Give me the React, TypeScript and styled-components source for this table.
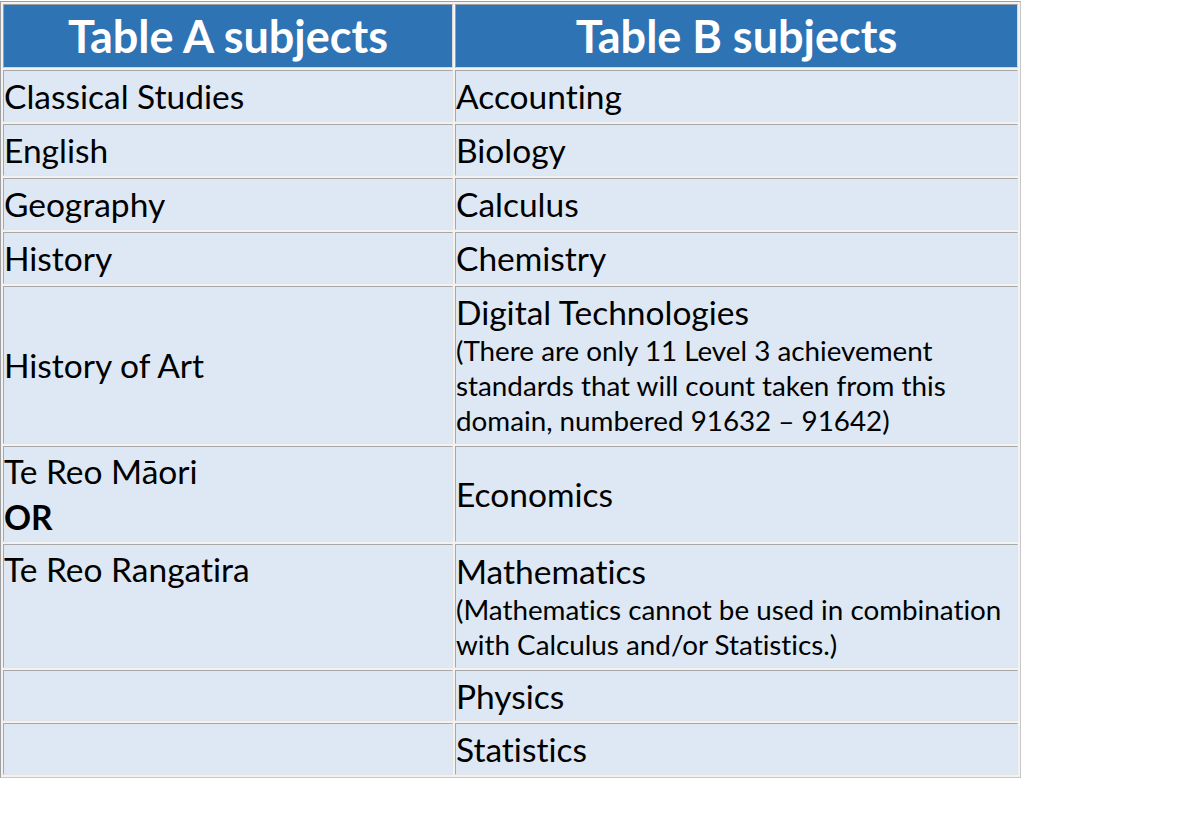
import styled, { createGlobalStyle } from "styled-components";

const GlobalStyle = createGlobalStyle`
    body {
        margin: 0;
        background: #ffffff;
        font-family: Lato, "Open Sans", sans-serif;
        font-variant-ligatures: none;
    }
`;

const Page = styled.div`
    padding-top: 1px;
`;

const SubjectTable = styled.table`
    width: 1021px;
    border-collapse: separate;
    border-spacing: 2px;
    border: 1px solid #9f9f9f;
    border-right-color: #c8c8c8;
    border-bottom-color: #c8c8c8;
    background: #f2f2f2;
    table-layout: fixed;
`;

const HeadCell = styled.th`
    height: 62px;
    padding: 0;
    background: #2e74b5;
    color: #ffffff;
    font-size: 45px;
    font-weight: 700;
    text-align: center;
    border: 1px solid #9f9f9f;
    border-right-color: #d8d8d8;
    border-bottom-color: #d8d8d8;
`;

const Cell = styled.td<{ $top?: boolean }>`
    padding: ${(p) => (p.$top ? "4px 0 0 0" : "0")};
    background: #dde8f4;
    color: #000000;
    font-size: 33.5px;
    line-height: 40px;
    vertical-align: ${(p) => (p.$top ? "top" : "middle")};
    border: 1px solid #a8a8a8;
    border-right-color: #e4e4e4;
    border-bottom-color: #e4e4e4;
`;

const Row = styled.tr<{ $h: number }>`
    height: ${(p) => p.$h}px;
`;

const Note = styled.div`
    margin-top: 1px;
    font-size: 27.8px;
    line-height: 35px;
`;

const Or = styled.div`
    margin-top: 6px;
    font-weight: 700;
`;

function App() {
    return (
        <Page>
            <GlobalStyle />
            <SubjectTable>
                <colgroup>
                    <col style={{ width: 450 }} />
                    <col />
                </colgroup>
                <thead>
                    <tr>
                        <HeadCell>Table A subjects</HeadCell>
                        <HeadCell>Table B subjects</HeadCell>
                    </tr>
                </thead>
                <tbody>
                    <Row $h={52}>
                        <Cell>Classical Studies</Cell>
                        <Cell>Accounting</Cell>
                    </Row>
                    <Row $h={52}>
                        <Cell>English</Cell>
                        <Cell>Biology</Cell>
                    </Row>
                    <Row $h={52}>
                        <Cell>Geography</Cell>
                        <Cell>Calculus</Cell>
                    </Row>
                    <Row $h={52}>
                        <Cell>History</Cell>
                        <Cell>Chemistry</Cell>
                    </Row>
                    <Row $h={158}>
                        <Cell>History of Art</Cell>
                        <Cell>
                            Digital Technologies
                            <Note>
                                (There are only 11 Level 3 achievement standards that will count taken from this
                                domain, numbered 91632 – 91642)
                            </Note>
                        </Cell>
                    </Row>
                    <Row $h={96}>
                        <Cell>
                            Te Reo Māori
                            <Or>OR</Or>
                        </Cell>
                        <Cell>Economics</Cell>
                    </Row>
                    <Row $h={124}>
                        <Cell $top>Te Reo Rangatira</Cell>
                        <Cell>
                            Mathematics
                            <Note>(Mathematics cannot be used in combination with Calculus and/or Statistics.)</Note>
                        </Cell>
                    </Row>
                    <Row $h={51}>
                        <Cell></Cell>
                        <Cell>Physics</Cell>
                    </Row>
                    <Row $h={52}>
                        <Cell></Cell>
                        <Cell>Statistics</Cell>
                    </Row>
                </tbody>
            </SubjectTable>
        </Page>
    );
}

export default App;
